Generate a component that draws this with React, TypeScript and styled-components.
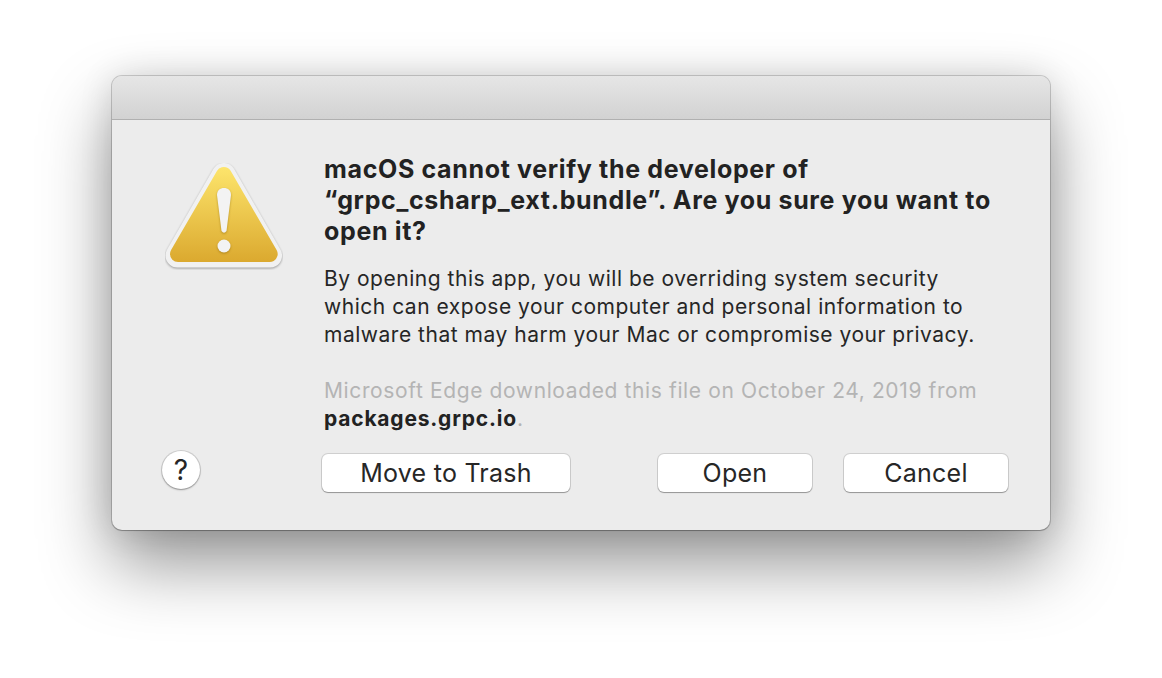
import React from 'react';
import styled, { createGlobalStyle } from 'styled-components';

const GlobalStyle = createGlobalStyle`
  html, body {
    margin: 0;
    padding: 0;
    width: 1162px;
    height: 678px;
    overflow: hidden;
    background: #ffffff;
    font-family: Inter, "Liberation Sans", sans-serif;
  }
`;

const Page = styled.div`
  box-sizing: border-box;
  width: 1162px;
  height: 678px;
  padding: 76px 112px 0;
`;

const Window = styled.div`
  box-sizing: border-box;
  width: 938px;
  height: 454px;
  display: flex;
  flex-direction: column;
  background: #ececec;
  border-radius: 10px;
  box-shadow:
    0 0 0 1px rgba(0, 0, 0, 0.17),
    0 1px 1px rgba(0, 0, 0, 0.18),
    0 34px 70px rgba(0, 0, 0, 0.42),
    0 0 34px rgba(0, 0, 0, 0.12);
`;

const TitleBar = styled.div`
  height: 43px;
  flex: none;
  border-radius: 10px 10px 0 0;
  background: linear-gradient(#e6e6e6, #d2d2d2);
  border-bottom: 1px solid #b0b0b0;
`;

const Body = styled.div`
  flex: 1;
  display: grid;
  grid-template-columns: 212px 1fr;
`;

const IconCell = styled.div`
  padding: 43px 0 0 53px;
`;

const Content = styled.div`
  padding-top: 34px;
`;

const Title = styled.h1`
  margin: 0;
  font-size: 25px;
  line-height: 31px;
  font-weight: 700;
  letter-spacing: 0.65px;
  color: #222222;
  white-space: nowrap;
`;

const Message = styled.p`
  margin: 18px 0 0;
  font-size: 21px;
  line-height: 28px;
  letter-spacing: 0.52px;
  color: #262626;
  white-space: nowrap;
`;

const Origin = styled.p`
  margin: 28px 0 0;
  font-size: 21px;
  line-height: 28px;
  letter-spacing: 0.62px;
  color: #b4b4b4;
  white-space: nowrap;

  strong {
    color: #222222;
    font-weight: 700;
    letter-spacing: 0.8px;
  }
`;

const Footer = styled.div`
  display: flex;
  align-items: flex-start;
  height: 79px;
  flex: none;
  padding-left: 50px;
`;

const HelpButton = styled.button`
  box-sizing: border-box;
  width: 38px;
  height: 38px;
  flex: none;
  padding: 0;
  margin-right: 122px;
  border: none;
  border-radius: 50%;
  background: #ffffff;
  color: #262626;
  font: 400 28px/38px Inter, sans-serif;
  box-shadow: 0 0 0 1px rgba(0, 0, 0, 0.12), 0 1px 2px rgba(0, 0, 0, 0.3);
`;

const Button = styled.button<{ $width: number; $gap?: number }>`
  box-sizing: border-box;
  width: ${({ $width }) => $width}px;
  height: 38px;
  margin: 3px 0 0 ${({ $gap }) => $gap ?? 0}px;
  padding: 0;
  flex: none;
  border: none;
  border-radius: 6px;
  background: #ffffff;
  color: #262626;
  font: 400 25px Inter, sans-serif;
  letter-spacing: 0.25px;
  box-shadow: 0 0 0 1px rgba(0, 0, 0, 0.12), 0 1px 1px rgba(0, 0, 0, 0.28);
`;

const Badge = styled.path`
  filter: drop-shadow(0 1px 1px rgba(0, 0, 0, 0.35));
`;

const Mark = styled.g`
  filter: drop-shadow(0 1px 1px rgba(120, 85, 0, 0.45));
`;

function WarningIcon(): React.ReactElement {
  return (
    <svg width="118" height="107" viewBox="0 0 118 107">
      <defs>
        <linearGradient id="amber" gradientUnits="userSpaceOnUse" x1="0" y1="4" x2="0" y2="99">
          <stop offset="0" stopColor="#fde56c" />
          <stop offset="1" stopColor="#dba92f" />
        </linearGradient>
      </defs>
      <Badge
        d="M58.750 12 L105 92.500 L12.500 92.500 Z"
        fill="#f1f1f1"
        stroke="#f1f1f1"
        strokeWidth="24"
        strokeLinejoin="round"
      />
      <path
        d="M58.850 12 L104.700 91 L13 91 Z"
        fill="url(#amber)"
        stroke="url(#amber)"
        strokeWidth="16"
        strokeLinejoin="round"
      />
      <Mark fill="#f3f3f3">
        <path d="M52 32 C52 27.500 55 25 59 25 C63 25 66 27.500 66 32 L61.500 68 Q59 71.500 56.500 68 Z" />
        <circle cx="59" cy="83" r="6.500" />
      </Mark>
    </svg>
  );
}

function App(): React.ReactElement {
  return (
    <Page>
      <GlobalStyle />
      <Window>
        <TitleBar />
        <Body>
          <IconCell>
            <WarningIcon />
          </IconCell>
          <Content>
            <Title>
              macOS cannot verify the developer of
              <br />
              “grpc_csharp_ext.bundle”. Are you sure you want to
              <br />
              open it?
            </Title>
            <Message>
              By opening this app, you will be overriding system security
              <br />
              which can expose your computer and personal information to
              <br />
              malware that may harm your Mac or compromise your privacy.
            </Message>
            <Origin>
              Microsoft Edge downloaded this file on October 24, 2019 from
              <br />
              <strong>packages.grpc.io</strong>.
            </Origin>
          </Content>
        </Body>
        <Footer>
          <HelpButton>?</HelpButton>
          <Button $width={248}>Move to Trash</Button>
          <Button $width={154} $gap={88}>Open</Button>
          <Button $width={164} $gap={32}>Cancel</Button>
        </Footer>
      </Window>
    </Page>
  );
}

export default App;
